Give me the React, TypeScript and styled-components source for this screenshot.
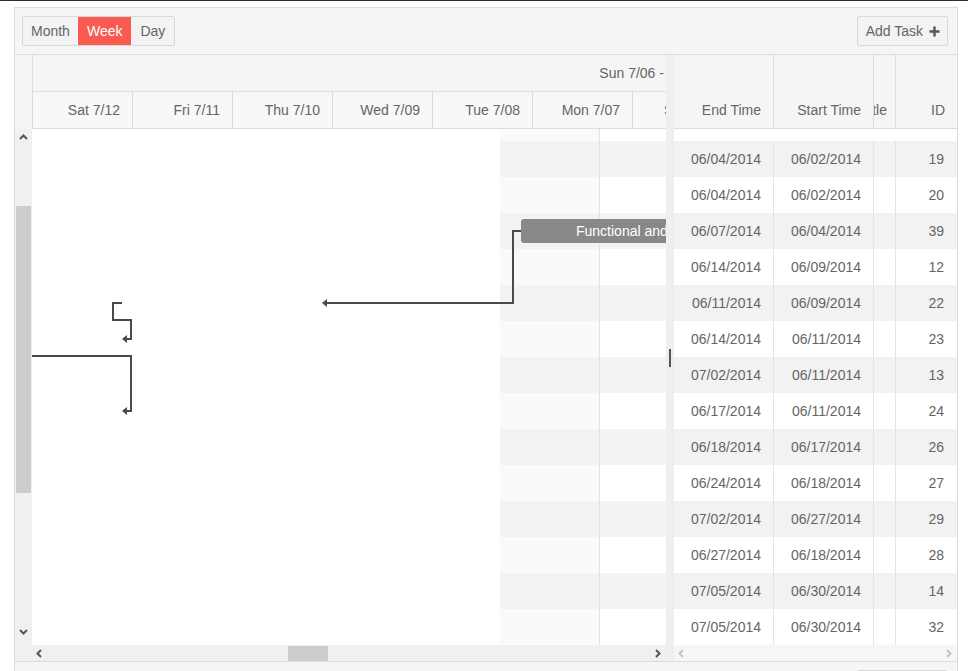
import React from 'react'
import styled, { createGlobalStyle } from 'styled-components'

const GlobalStyle = createGlobalStyle`
  html, body {
    margin: 0;
    padding: 0;
    background: #fff;
  }
  body {
    font-family: 'Liberation Sans', Arial, sans-serif;
    font-size: 14px;
    color: #656565;
    overflow: hidden;
  }
  * {
    box-sizing: border-box;
  }
`

const Page = styled.div`
  height: 671px;
  border-top: 1px solid #2d2d2d;
  padding: 6px 0 0 14px;
  overflow: hidden;
`

const Gantt = styled.div`
  width: 944px;
  border: 1px solid #dcdcdc;
  background: #f5f5f5;
`

const Toolbar = styled.div`
  height: 47px;
  display: flex;
  align-items: center;
  justify-content: space-between;
  padding: 0 9px 0 7px;
  border-bottom: 1px solid #dcdcdc;
`

const ViewGroup = styled.div`
  display: flex;
  height: 30px;
  border: 1px solid #d8d8d8;
  border-radius: 2px;
  overflow: hidden;
`

const ViewButton = styled.div<{ $active?: boolean }>`
  display: flex;
  align-items: center;
  padding: 0 ${p => (p.$active ? '9px' : '8px')};
  background: ${p => (p.$active ? '#fa5a4f' : '#f3f3f3')};
  color: ${p => (p.$active ? '#fff' : '#656565')};

  &:last-child {
    padding: 0 9px;
  }
`

const ToolButton = styled.div`
  display: flex;
  align-items: center;
  gap: 6px;
  height: 30px;
  padding: 0 7px 0 8px;
  border: 1px solid #d8d8d8;
  border-radius: 2px;
  background: #f3f3f3;
`

const Main = styled.div`
  display: flex;
  height: 606px;
`

const Timeline = styled.div`
  width: 651px;
  display: flex;
  flex-direction: column;
  overflow: hidden;
`

const TimelineHeader = styled.div`
  display: flex;
  height: 74px;
  flex-shrink: 0;
`

const Gutter = styled.div`
  width: 17px;
  flex-shrink: 0;
  background: #f5f5f5;
`

const HeaderRows = styled.div`
  flex: 1;
  overflow: hidden;
  border-left: 1px solid #dcdcdc;
`

const HeaderRow = styled.div<{ $light?: boolean }>`
  display: flex;
  height: 37px;
  border-bottom: 1px solid #dcdcdc;
  background: ${p => (p.$light ? '#f8f8f8' : '#f5f5f5')};
`

const HeaderCell = styled.div<{ $w: number }>`
  width: ${p => p.$w}px;
  flex-shrink: 0;
  display: flex;
  align-items: center;
  justify-content: flex-end;
  padding-right: 12px;
  border-right: 1px solid #dcdcdc;
  white-space: nowrap;
`

const TimelineBody = styled.div`
  display: flex;
  height: 516px;
  flex-shrink: 0;
`

const VScroll = styled.div`
  width: 17px;
  flex-shrink: 0;
  background: #f0f0f0;
  display: flex;
  flex-direction: column;
  align-items: center;
  padding: 5px 1px 5px 0;
`

const VThumb = styled.div`
  width: 15px;
  height: 287px;
  margin-top: 63px;
  background: #cdcdcd;
`

const VScrollEnd = styled.div`
  margin-top: auto;
`

const Canvas = styled.div`
  flex: 1;
  position: relative;
  overflow: hidden;
  background: #fff;
`

const RowsTable = styled.div`
  margin-left: 468px;
  width: 400px;
`

const SlotRow = styled.div<{ $h: number; $alt?: boolean }>`
  display: flex;
  height: ${p => p.$h}px;
  background: ${p => (p.$alt ? '#f3f3f3' : '#fff')};
`

const SlotShade = styled.div<{ $alt?: boolean }>`
  width: 100px;
  border-right: 1px solid #e2e2e2;
  background: ${p => (p.$alt ? '#f3f3f3' : '#fafafa')};
`

const TaskBar = styled.div`
  position: absolute;
  left: 489px;
  top: 90px;
  width: 420px;
  height: 24px;
  border-radius: 3px;
  background: #888;
  color: #fff;
  display: flex;
  align-items: center;
  padding-left: 55px;
  white-space: nowrap;
`

const Links = styled.svg`
  position: absolute;
  left: 0;
  top: 0;
`

const HScroll = styled.div<{ $light?: boolean; $indent?: number }>`
  height: 16px;
  flex-shrink: 0;
  display: flex;
  align-items: center;
  padding-left: ${p => p.$indent ?? 0}px;
  background: ${p => (p.$light ? '#f6f6f6' : '#f0f0f0')};
`

const ScrollArrow = styled.div<{ $push?: boolean }>`
  width: 16px;
  height: 16px;
  display: flex;
  align-items: center;
  justify-content: center;
  margin-left: ${p => (p.$push ? 'auto' : '0')};
`

const HThumb = styled.div`
  width: 40px;
  height: 15px;
  margin-left: 240px;
  background: #cdcdcd;
`

const Splitter = styled.div`
  width: 8px;
  flex-shrink: 0;
  background: #efefef;
  display: flex;
  align-items: center;
  justify-content: center;
`

const SplitHandle = styled.div`
  width: 2px;
  height: 18px;
  background: #555;
`

const Grid = styled.div`
  width: 283px;
  display: flex;
  flex-direction: column;
  overflow: hidden;
`

const GridHeader = styled.div`
  display: flex;
  height: 74px;
  flex-shrink: 0;
  border-bottom: 1px solid #dcdcdc;
  background: #f5f5f5;
`

const GridBody = styled.div`
  height: 516px;
  flex-shrink: 0;
  overflow: hidden;
`

const GridRows = styled.div`
  margin-top: -24px;
`

const GridRow = styled.div<{ $alt?: boolean }>`
  display: flex;
  height: 36px;
  background: ${p => (p.$alt ? '#f2f2f2' : '#fff')};
`

const Cell = styled.div<{ $w: number; $first?: boolean; $pad?: number; $head?: boolean }>`
  width: ${p => p.$w}px;
  flex-shrink: 0;
  display: flex;
  align-items: ${p => (p.$head ? 'flex-end' : 'center')};
  justify-content: flex-end;
  overflow: hidden;
  white-space: nowrap;
  line-height: 17px;
  padding: ${p => (p.$head ? `0 ${p.$pad ?? 12}px 9px 0` : `0 ${p.$pad ?? 12}px 0 0`)};
  border-left: ${p =>
    p.$first ? 'none' : `1px solid ${p.$head ? '#dcdcdc' : '#e4e4e4'}`};
`

const Footer = styled.div`
  height: 20px;
  border-top: 1px solid #dcdcdc;
  display: flex;
  justify-content: flex-end;
  padding: 8px 9px 0 0;
`

const FooterButton = styled.div`
  width: 91px;
  height: 30px;
  border: 1px solid #d8d8d8;
  border-radius: 2px;
  background: #f3f3f3;
`

type Dir = 'up' | 'down' | 'left' | 'right'

const chevronPath: Record<Dir, string> = {
  up: 'M1 5 L4.5 1.5 L8 5',
  down: 'M1 2 L4.5 5.5 L8 2',
  left: 'M5 1 L1.5 4.5 L5 8',
  right: 'M2 1 L5.5 4.5 L2 8',
}

const Chevron = ({ dir, color = '#555' }: { dir: Dir; color?: string }) => (
  <svg width="9" height="9" viewBox="0 0 9 9">
    <path d={chevronPath[dir]} fill="none" stroke={color} strokeWidth="2" />
  </svg>
)

const PlusIcon = () => (
  <svg width="11" height="11" viewBox="0 0 11 11">
    <path d="M5.5 0.5 V10.5 M0.5 5.5 H10.5" stroke="#555" strokeWidth="2.4" />
  </svg>
)

const weekDays = ['Sat 7/12', 'Fri 7/11', 'Thu 7/10', 'Wed 7/09', 'Tue 7/08', 'Mon 7/07', 'Sun 7/06']

const tasks = [
  { id: 19, start: '06/02/2014', end: '06/04/2014' },
  { id: 20, start: '06/02/2014', end: '06/04/2014' },
  { id: 39, start: '06/04/2014', end: '06/07/2014' },
  { id: 12, start: '06/09/2014', end: '06/14/2014' },
  { id: 22, start: '06/09/2014', end: '06/11/2014' },
  { id: 23, start: '06/11/2014', end: '06/14/2014' },
  { id: 13, start: '06/11/2014', end: '07/02/2014' },
  { id: 24, start: '06/11/2014', end: '06/17/2014' },
  { id: 26, start: '06/17/2014', end: '06/18/2014' },
  { id: 27, start: '06/18/2014', end: '06/24/2014' },
  { id: 29, start: '06/27/2014', end: '07/02/2014' },
  { id: 28, start: '06/18/2014', end: '06/27/2014' },
  { id: 14, start: '06/30/2014', end: '07/05/2014' },
  { id: 32, start: '06/30/2014', end: '07/05/2014' },
]

// dependency lines, in canvas coordinates
const links = [
  { d: 'M489 102 H481 V174 H294', tip: [290, 174] },
  { d: 'M90 174 H81 V191 H99 V210 H94', tip: [90, 210] },
  { d: 'M0 227 H99 V282 H94', tip: [90, 282] },
]

export default function App() {
  return (
    <Page>
      <GlobalStyle />
      <Gantt>
        <Toolbar>
          <ViewGroup>
            <ViewButton>Month</ViewButton>
            <ViewButton $active>Week</ViewButton>
            <ViewButton>Day</ViewButton>
          </ViewGroup>
          <ToolButton>
            Add Task
            <PlusIcon />
          </ToolButton>
        </Toolbar>

        <Main>
          <Timeline>
            <TimelineHeader>
              <Gutter />
              <HeaderRows>
                <HeaderRow>
                  <HeaderCell $w={700}>Sun 7/06 - Sat 7/12</HeaderCell>
                </HeaderRow>
                <HeaderRow $light>
                  {weekDays.map(day => (
                    <HeaderCell key={day} $w={100}>
                      {day}
                    </HeaderCell>
                  ))}
                </HeaderRow>
              </HeaderRows>
            </TimelineHeader>

            <TimelineBody>
              <VScroll>
                <Chevron dir="up" />
                <VThumb />
                <VScrollEnd>
                  <Chevron dir="down" />
                </VScrollEnd>
              </VScroll>
              <Canvas>
                <RowsTable>
                  <SlotRow $h={12}>
                    <SlotShade />
                  </SlotRow>
                  {tasks.map((t, i) => (
                    <SlotRow key={t.id} $h={36} $alt={i % 2 === 0}>
                      <SlotShade $alt={i % 2 === 0} />
                    </SlotRow>
                  ))}
                </RowsTable>
                <TaskBar>Functional and Technical Specifications</TaskBar>
                <Links width="634" height="516">
                  {links.map((l, i) => (
                    <g key={i}>
                      <path d={l.d} fill="none" stroke="#4a4a4a" strokeWidth="2" />
                      <polygon
                        points={`${l.tip[0]},${l.tip[1]} ${l.tip[0] + 5},${l.tip[1] - 4} ${l.tip[0] + 5},${l.tip[1] + 4}`}
                        fill="#4a4a4a"
                      />
                    </g>
                  ))}
                </Links>
              </Canvas>
            </TimelineBody>

            <HScroll $indent={17}>
              <ScrollArrow>
                <Chevron dir="left" />
              </ScrollArrow>
              <HThumb />
              <ScrollArrow $push>
                <Chevron dir="right" />
              </ScrollArrow>
            </HScroll>
          </Timeline>

          <Splitter>
            <SplitHandle />
          </Splitter>

          <Grid>
            <GridHeader>
              <Cell $head $first $w={99}>End Time</Cell>
              <Cell $head $w={100}>Start Time</Cell>
              <Cell $head $w={22} $pad={8}>Title</Cell>
              <Cell $head $w={62}>ID</Cell>
            </GridHeader>
            <GridBody>
              <GridRows>
                <GridRow />
                {tasks.map((t, i) => (
                  <GridRow key={t.id} $alt={i % 2 === 0}>
                    <Cell $first $w={99}>{t.end}</Cell>
                    <Cell $w={100}>{t.start}</Cell>
                    <Cell $w={22} />
                    <Cell $w={62} $pad={13}>{t.id}</Cell>
                  </GridRow>
                ))}
              </GridRows>
            </GridBody>
            <HScroll $light>
              <ScrollArrow>
                <Chevron dir="left" color="#c4c4c4" />
              </ScrollArrow>
              <ScrollArrow $push>
                <Chevron dir="right" color="#c4c4c4" />
              </ScrollArrow>
            </HScroll>
          </Grid>
        </Main>

        <Footer>
          <FooterButton />
        </Footer>
      </Gantt>
    </Page>
  )
}
